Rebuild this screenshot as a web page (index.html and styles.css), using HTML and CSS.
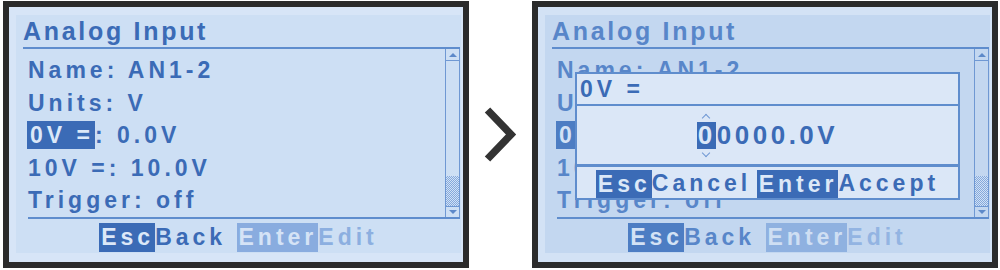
FILE: index.html
```html
<!DOCTYPE html>
<html lang="en">
<head>
<meta charset="utf-8">
<title>Analog Input</title>
<link rel="stylesheet" href="styles.css">
</head>
<body>
<div class="page">
  <section class="screen">
    <div class="display">
      <div class="title">Analog Input</div>
      <div class="body">
        <ul class="menu">
          <li>Name: AN1-2</li>
          <li>Units: V</li>
          <li><span class="sel">0V =</span>: 0.0V</li>
          <li>10V =: 10.0V</li>
          <li>Trigger: off</li>
        </ul>
        <div class="scroll">
          <div class="sb-up"></div>
          <div class="sb-track"></div>
          <div class="sb-thumb"></div>
          <div class="sb-down"></div>
        </div>
      </div>
      <div class="footer"><span class="key">Esc</span>Back <span class="key dim">Enter</span><span class="dim-text">Edit</span></div>
    </div>
  </section>

  <div class="arrow">
    <svg width="63" height="267" viewBox="0 0 63 267" aria-hidden="true">
      <polyline points="18.5,109 42,133.5 18.5,158" fill="none" stroke="#333333" stroke-width="7.5" stroke-linejoin="miter"/>
    </svg>
  </div>

  <section class="screen edit">
    <div class="display">
      <div class="title">Analog Input</div>
      <div class="body">
        <ul class="menu">
          <li>Name: AN1-2</li>
          <li>Units: V</li>
          <li><span class="sel">0V =</span>: 0.0V</li>
          <li>10V =: 10.0V</li>
          <li>Trigger: off</li>
        </ul>
        <div class="scroll">
          <div class="sb-up"></div>
          <div class="sb-track"></div>
          <div class="sb-thumb"></div>
          <div class="sb-down"></div>
        </div>
      </div>
      <div class="footer"><span class="key">Esc</span>Back <span class="key dim">Enter</span><span class="dim-text">Edit</span></div>

      <div class="popup">
        <div class="pop-head">0V =</div>
        <div class="pop-value"><span class="digit">0</span>0000.0V</div>
        <div class="pop-foot"><span class="key">Esc</span>Cancel <span class="key">Enter</span>Accept</div>
      </div>
    </div>
  </section>
</div>
</body>
</html>
```

FILE: styles.css
```css
* {
  box-sizing: border-box;
  margin: 0;
  padding: 0;
}

html,
body {
  width: 1000px;
  height: 270px;
  overflow: hidden;
  background: #ffffff;
}

body {
  font-family: "Liberation Sans", "DejaVu Sans", sans-serif;
  font-weight: bold;
}

.page {
  display: flex;
  height: 270px;
  padding: 1px 0 0 3px;
}

.screen {
  width: 466px;
  height: 267px;
  border: 6px solid #2b2b2b;
  background: #d7e5f7;
  padding: 8px 2px 9px 7px;
}

.display {
  position: relative;
  height: 238px;
  display: flex;
  flex-direction: column;
  background: #cddff4;
  color: #3b6bb6;
}

.title {
  height: 34px;
  margin: 0 1px 0 7px;
  border-bottom: 2px solid #5f8dcd;
  font-size: 25px;
  line-height: 33px;
  letter-spacing: 2.7px;
  white-space: nowrap;
}

.body {
  height: 170px;
  margin: 0 1px 0 12px;
  border-bottom: 2px solid #5f8dcd;
  display: flex;
}

.menu {
  flex: 1;
  list-style: none;
  padding-top: 5px;
  font-size: 23px;
  line-height: 32.5px;
  letter-spacing: 4px;
  white-space: nowrap;
}

.sel {
  display: inline-block;
  height: 28px;
  line-height: 28px;
  margin-left: -1px;
  padding: 0 1px 0 3px;
  background: #3b6bb6;
  color: #dce8f8;
}

.scroll {
  width: 15px;
  display: flex;
  flex-direction: column;
  border-left: 1px solid #6f98d3;
  border-right: 1px solid #6f98d3;
}

.sb-up {
  height: 12px;
  border-bottom: 1px solid #6f98d3;
  display: flex;
  align-items: center;
  justify-content: center;
}

.sb-up::after {
  content: "";
  width: 0;
  height: 0;
  border-left: 4.5px solid transparent;
  border-right: 4.5px solid transparent;
  border-bottom: 4px solid #5d89c9;
}

.sb-track {
  flex: 1;
}

.sb-thumb {
  height: 30px;
  background: repeating-conic-gradient(#84a9dc 0 25%, #d2e1f5 0 50%) 0 0 / 2px 2px;
}

.sb-down {
  height: 11px;
  border-top: 1px solid #6f98d3;
  display: flex;
  align-items: center;
  justify-content: center;
}

.sb-down::after {
  content: "";
  width: 0;
  height: 0;
  border-left: 4.5px solid transparent;
  border-right: 4.5px solid transparent;
  border-top: 4px solid #5d89c9;
}

.footer {
  height: 34px;
  line-height: 36px;
  text-align: center;
  font-size: 23px;
  letter-spacing: 4px;
  white-space: nowrap;
}

.key {
  display: inline-block;
  height: 29px;
  line-height: 29px;
  padding: 0 1px 0 2px;
  background: #3b6bb6;
  color: #dce8f8;
}

.key.dim {
  background: #89acdf;
  color: #d5e3f6;
}

.dim-text {
  color: #8cafe0;
}

.arrow {
  width: 63px;
  height: 267px;
}

.arrow svg {
  display: block;
}

/* edit screen: background content faded behind the popup */
.edit {
  background: #d3e2f5;
}

.edit .display {
  background: #c3d7f0;
  color: #5886c9;
}

.edit .sel,
.edit .footer .key {
  background: #4d7dc3;
  color: #d3e2f5;
}

.edit .footer .key.dim {
  background: #8fb1e0;
  color: #cfdff3;
}

.edit .dim-text {
  color: #93b4e2;
}

.popup {
  position: absolute;
  left: 30px;
  top: 57px;
  width: 385px;
  height: 128px;
  display: flex;
  flex-direction: column;
  border: 2px solid #5f8dcd;
  background: #dbe7f7;
  color: #3b6bb6;
}

.pop-head {
  height: 32px;
  padding-left: 3px;
  border-bottom: 2px solid #5f8dcd;
  font-size: 23px;
  line-height: 30px;
  letter-spacing: 4px;
  white-space: nowrap;
}

.pop-value {
  height: 61px;
  border-bottom: 3px solid #5f8dcd;
  display: flex;
  align-items: center;
  justify-content: center;
  font-size: 26px;
  letter-spacing: 3.5px;
  white-space: nowrap;
}

.digit {
  position: relative;
  display: inline-block;
  height: 27px;
  line-height: 27px;
  padding-left: 1px;
  margin-right: 1px;
  background: #3b6bb6;
  color: #dce8f8;
}

.digit::before,
.digit::after {
  content: "";
  position: absolute;
  left: 6px;
  width: 5px;
  height: 5px;
  border-left: 1px solid #6f98d3;
  border-top: 1px solid #6f98d3;
}

.digit::before {
  top: -7px;
  transform: rotate(45deg);
}

.digit::after {
  bottom: -7px;
  transform: rotate(225deg);
}

.pop-foot {
  flex: 1;
  display: flex;
  align-items: center;
  justify-content: center;
  padding-top: 2px;
  font-size: 23px;
  letter-spacing: 4px;
  word-spacing: -5px;
  white-space: pre;
}

.pop-foot .key {
  height: 28px;
  line-height: 28px;
  background: #3b6bb6;
  color: #dce8f8;
}
```
